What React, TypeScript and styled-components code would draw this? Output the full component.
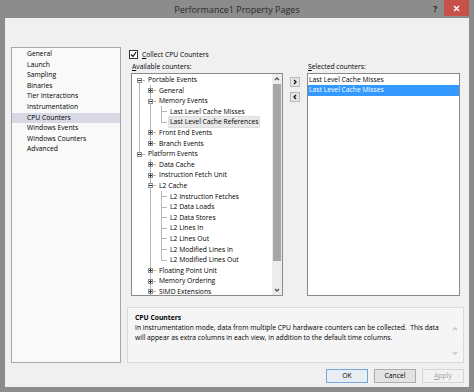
import React from "react";
import styled, { createGlobalStyle } from "styled-components";

const FONT = `"Segoe UI", "Open Sans", "Liberation Sans", sans-serif`;
const ROW = 10.6;
const CELL = 11;

const GlobalStyle = createGlobalStyle`
	html, body {
		margin: 0;
		padding: 0;
		background: #8c8c8c;
	}
	body {
		font-family: ${FONT};
		font-size: 6.75px;
		color: #000;
	}
	* {
		box-sizing: border-box;
	}
`;

const Frame = styled.div`
	width: 474px;
	height: 392px;
	background: #8c8c8c;
	display: flex;
	flex-direction: column;
	overflow: hidden;
`;

const TitleBar = styled.div`
	height: 18px;
	display: grid;
	grid-template-columns: 1fr auto 1fr;
	align-items: center;
`;

const Title = styled.div`
	grid-column: 2;
	font-size: 9px;
	color: #2a2a2a;
`;

const Controls = styled.div`
	grid-column: 3;
	justify-self: end;
	align-self: start;
	display: flex;
	align-items: center;
	height: 16px;
`;

const Help = styled.span`
	font-weight: 700;
	font-size: 8px;
	color: #1e1e1e;
	margin-right: 7px;
`;

const Close = styled.div`
	width: 25px;
	height: 16px;
	margin-right: 5px;
	background: #c8504b;
	display: flex;
	align-items: center;
	justify-content: center;
`;

const Client = styled.div`
	flex: 1;
	margin: 0 5px 5px 5px;
	background: #f0f0f0;
	padding: 29px 5px 4px 6px;
	display: flex;
	flex-direction: column;
`;

const Body = styled.div`
	display: flex;
	gap: 6px;
	height: 316px;
`;

const Nav = styled.div`
	width: 110px;
	border: 1px solid #a7a7a7;
	background: #f9f9f9;
	padding-top: 1px;
`;

const NavItem = styled.div<{ $active?: boolean }>`
	height: ${ROW}px;
	line-height: ${ROW}px;
	padding-left: 15px;
	background: ${(p) => (p.$active ? "#d8d9e4" : "transparent")};
`;

const RightCol = styled.div`
	flex: 1;
	display: flex;
	flex-direction: column;
`;

const CheckRow = styled.label`
	height: 14px;
	display: flex;
	align-items: center;
	gap: 4px;
	padding-left: 2px;
`;

const CheckBox = styled.span`
	width: 9px;
	height: 9px;
	border: 1px solid #333;
	background: #fff;
	display: flex;
	align-items: center;
	justify-content: center;
`;

const Counters = styled.div`
	display: flex;
	height: 235px;
`;

const Pane = styled.div<{ $left: number; $width: number }>`
	display: flex;
	flex-direction: column;
	margin-left: ${(p) => p.$left}px;
	width: ${(p) => p.$width}px;
`;

const PaneLabel = styled.div`
	height: 12px;
	line-height: 12px;
	padding-left: 1px;
`;

const ListBox = styled.div`
	flex: 1;
	border: 1px solid #8a8a8a;
	background: #fff;
	display: flex;
	overflow: hidden;
`;

const TreeContent = styled.div`
	flex: 1;
	overflow: hidden;
	padding-top: 0.5px;
`;

const TreeRowBox = styled.div`
	display: flex;
	align-items: center;
	height: ${ROW}px;
	white-space: nowrap;
`;

const TreeLabel = styled.span<{ $selected?: boolean }>`
	margin-left: 2px;
	padding: 0 1px;
	line-height: ${ROW - 1}px;
	background: ${(p) => (p.$selected ? "#e8e8e8" : "transparent")};
	outline: ${(p) => (p.$selected ? "1px solid #dedede" : "none")};
`;

const ScrollBar = styled.div`
	width: 10px;
	background: #ececec;
	display: flex;
	flex-direction: column;
`;

const ScrollArrow = styled.div`
	height: 10px;
	display: flex;
	align-items: center;
	justify-content: center;
`;

const Track = styled.div`
	flex: 1;
	padding: 0 1px;
`;

const Thumb = styled.div`
	height: 177px;
	background: #a6a6a6;
`;

const MoveCol = styled.div`
	margin-left: 7px;
	width: 10px;
	padding-top: 16px;
	display: flex;
	flex-direction: column;
	gap: 5px;
`;

const MoveBtn = styled.div`
	width: 10px;
	height: 10px;
	background: #e6e6e6;
	border: 1px solid #b9b9b9;
	display: flex;
	align-items: center;
	justify-content: center;
`;

const PlainList = styled.div`
	flex: 1;
	padding-top: 0.5px;
`;

const PlainItem = styled.div<{ $selected?: boolean }>`
	height: ${ROW}px;
	line-height: ${ROW}px;
	padding-left: 1px;
	background: ${(p) => (p.$selected ? "#3399ff" : "transparent")};
	color: ${(p) => (p.$selected ? "#fff" : "#000")};
`;

const Desc = styled.div`
	margin-top: 11px;
	height: 56px;
	border: 1px solid #d9d9d9;
	background: #f5f5f5;
	display: flex;
`;

const DescText = styled.div`
	flex: 1;
	padding: 5px 0 0 7px;
	line-height: 10px;
	white-space: nowrap;
`;

const DescTitle = styled.div`
	font-weight: 700;
`;

const DescScroll = styled.div`
	width: 12px;
	margin-right: 2px;
	padding: 18px 0 6px;
	display: flex;
	flex-direction: column;
	justify-content: space-between;
	align-items: center;
`;

const Footer = styled.div`
	margin-top: 6px;
	display: flex;
	justify-content: flex-end;
	gap: 6px;
`;

const DialogButton = styled.div<{ $kind: "default" | "normal" | "disabled" }>`
	width: 42px;
	height: 14px;
	line-height: 12px;
	text-align: center;
	border: 1px solid
		${(p) =>
			p.$kind === "default" ? "#74a8dc" : p.$kind === "disabled" ? "#d6d6d6" : "#adadad"};
	background: ${(p) =>
		p.$kind === "default" ? "#e8edf3" : p.$kind === "disabled" ? "#f2f2f2" : "#e2e2e2"};
	color: ${(p) => (p.$kind === "disabled" ? "#a3a3a3" : "#000")};
`;

const Key = styled.span`
	text-decoration: underline;
`;

type TreeNode = {
	label: string;
	open?: boolean;
	selected?: boolean;
	more?: boolean;
	children?: TreeNode[];
};

const tree: TreeNode[] = [
	{
		label: "Portable Events",
		open: true,
		children: [
			{ label: "General", children: [] },
			{
				label: "Memory Events",
				open: true,
				children: [
					{ label: "Last Level Cache Misses" },
					{ label: "Last Level Cache References", selected: true },
				],
			},
			{ label: "Front End Events", children: [] },
			{ label: "Branch Events", children: [] },
		],
	},
	{
		label: "Platform Events",
		open: true,
		more: true,
		children: [
			{ label: "Data Cache", children: [] },
			{ label: "Instruction Fetch Unit", children: [] },
			{
				label: "L2 Cache",
				open: true,
				children: [
					{ label: "L2 Instruction Fetches" },
					{ label: "L2 Data Loads" },
					{ label: "L2 Data Stores" },
					{ label: "L2 Lines In" },
					{ label: "L2 Lines Out" },
					{ label: "L2 Modified Lines In" },
					{ label: "L2 Modified Lines Out" },
				],
			},
			{ label: "Floating Point Unit", children: [] },
			{ label: "Memory Ordering", children: [] },
			{ label: "SIMD Extensions", children: [] },
		],
	},
];

type FlatRow = {
	node: TreeNode;
	depth: number;
	guides: boolean[];
	first: boolean;
	last: boolean;
};

function flatten(
	nodes: TreeNode[],
	depth: number,
	guides: boolean[],
	more: boolean,
	out: FlatRow[]
) {
	nodes.forEach((node, i) => {
		const last = i === nodes.length - 1 && !more;
		out.push({ node, depth, guides, first: depth === 0 && i === 0, last });
		if (node.open && node.children) {
			flatten(node.children, depth + 1, [...guides, !last], !!node.more, out);
		}
	});
	return out;
}

const rows = flatten(tree, 0, [], false, []);

const LINE = "#b5b5b5";

// tree guide lines and the +/- box, drawn per row
const Gutter = ({ row }: { row: FlatRow }) => {
	const w = 2 + CELL * (row.depth + 1);
	const cy = 5.5;
	const cx = 2 + CELL * row.depth + 5.5;
	const hasBox = row.node.children !== undefined;
	return (
		<svg width={w} height={ROW} style={{ flex: "none", display: "block" }}>
			{row.guides.map((g, k) =>
				g ? (
					<line
						key={k}
						x1={2 + CELL * k + 5.5}
						x2={2 + CELL * k + 5.5}
						y1={0}
						y2={ROW}
						stroke={LINE}
					/>
				) : null
			)}
			<line x1={cx} x2={cx} y1={row.first ? cy : 0} y2={row.last ? cy : ROW} stroke={LINE} />
			<line x1={cx} x2={w} y1={cy} y2={cy} stroke={LINE} />
			{hasBox && (
				<g>
					<rect x={cx - 2} y={cy - 2} width={4} height={4} fill="#fff" stroke="#8f8f8f" />
					<line x1={cx - 1.5} x2={cx + 1.5} y1={cy} y2={cy} stroke="#333" />
					{!row.node.open && (
						<line x1={cx} x2={cx} y1={cy - 1.5} y2={cy + 1.5} stroke="#333" />
					)}
				</g>
			)}
		</svg>
	);
};

const Chevron = ({ dir, color = "#444" }: { dir: "up" | "down" | "left" | "right"; color?: string }) => {
	const d = {
		up: "M1 4 L3 2 L5 4",
		down: "M1 2 L3 4 L5 2",
		left: "M4 1 L2 3 L4 5",
		right: "M2 1 L4 3 L2 5",
	}[dir];
	return (
		<svg width={6} height={6} style={{ display: "block" }}>
			<path d={d} fill="none" stroke={color} strokeWidth={1.3} />
		</svg>
	);
};

const navItems = [
	"General",
	"Launch",
	"Sampling",
	"Binaries",
	"Tier Interactions",
	"Instrumentation",
	"CPU Counters",
	"Windows Events",
	"Windows Counters",
	"Advanced",
];

const App = (): JSX.Element => {
	return (
		<>
			<GlobalStyle />
			<Frame>
				<TitleBar>
					<Title>Performance1 Property Pages</Title>
					<Controls>
						<Help>?</Help>
						<Close>
							<svg width={7} height={7}>
								<path d="M1 1 L6 6 M6 1 L1 6" stroke="#fff" strokeWidth={1.4} />
							</svg>
						</Close>
					</Controls>
				</TitleBar>
				<Client>
					<Body>
						<Nav>
							{navItems.map((n) => (
								<NavItem key={n} $active={n === "CPU Counters"}>
									{n}
								</NavItem>
							))}
						</Nav>
						<RightCol>
							<CheckRow>
								<CheckBox>
									<svg width={7} height={7}>
										<path d="M1 3.5 L3 5.5 L6 1" fill="none" stroke="#222" strokeWidth={1.3} />
									</svg>
								</CheckBox>
								<span>
									<Key>C</Key>ollect CPU Counters
								</span>
							</CheckRow>
							<Counters>
								<Pane $left={4} $width={152}>
									<PaneLabel>
										<Key>A</Key>vailable counters:
									</PaneLabel>
									<ListBox>
										<TreeContent>
											{rows.map((r, i) => (
												<TreeRowBox key={i}>
													<Gutter row={r} />
													<TreeLabel $selected={r.node.selected}>{r.node.label}</TreeLabel>
												</TreeRowBox>
											))}
										</TreeContent>
										<ScrollBar>
											<ScrollArrow>
												<Chevron dir="up" color="#555" />
											</ScrollArrow>
											<Track>
												<Thumb />
											</Track>
											<ScrollArrow>
												<Chevron dir="down" color="#555" />
											</ScrollArrow>
										</ScrollBar>
									</ListBox>
								</Pane>
								<MoveCol>
									<MoveBtn>
										<Chevron dir="right" color="#111" />
									</MoveBtn>
									<MoveBtn>
										<Chevron dir="left" color="#111" />
									</MoveBtn>
								</MoveCol>
								<Pane $left={7} $width={153}>
									<PaneLabel>
										<Key>S</Key>elected counters:
									</PaneLabel>
									<ListBox>
										<PlainList>
											<PlainItem>Last Level Cache Misses</PlainItem>
											<PlainItem $selected>Last Level Cache Misses</PlainItem>
										</PlainList>
									</ListBox>
								</Pane>
							</Counters>
							<Desc>
								<DescText>
									<DescTitle>CPU Counters</DescTitle>
									<div>
										In instrumentation mode, data from multiple CPU hardware counters can be
										collected.&nbsp; This data
									</div>
									<div>will appear as extra columns in each view, in addition to the default time columns.</div>
								</DescText>
								<DescScroll>
									<Chevron dir="up" color="#c4c4c4" />
									<Chevron dir="down" color="#c4c4c4" />
								</DescScroll>
							</Desc>
						</RightCol>
					</Body>
					<Footer>
						<DialogButton $kind="default">OK</DialogButton>
						<DialogButton $kind="normal">Cancel</DialogButton>
						<DialogButton $kind="disabled">
							<Key>A</Key>pply
						</DialogButton>
					</Footer>
				</Client>
			</Frame>
		</>
	);
};

export default App;
